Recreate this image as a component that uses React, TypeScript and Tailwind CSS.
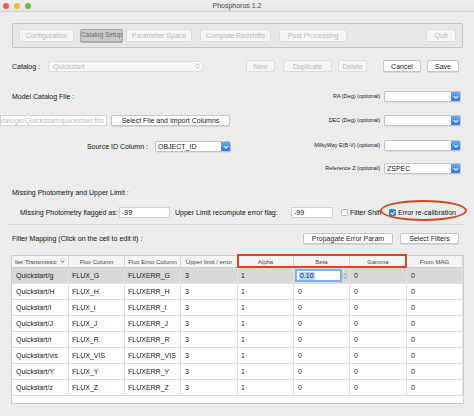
import type { ReactNode } from "react";

type BtnProps = {
  children: ReactNode;
  className?: string;
  disabled?: boolean;
};

function Button({ children, className = "", disabled = false }: BtnProps) {
  const look = disabled
    ? "border-[#dcdcdc] bg-[#f5f5f5] text-[#b9b9b9]"
    : "border-[#c6c6c6] bg-white text-[#1e1e1e] shadow-[0_0.5px_0.5px_rgba(0,0,0,0.18)]";
  return (
    <div
      className={`flex shrink-0 items-center justify-center whitespace-nowrap rounded-[2px] border text-[7px] leading-none ${look} ${className}`}
    >
      {children}
    </div>
  );
}

function ChevronDown({ className = "" }: { className?: string }) {
  return (
    <svg viewBox="0 0 8 8" className={className} fill="none" stroke="currentColor" strokeWidth={1.4}>
      <path d="M1.5 3 L4 5.5 L6.5 3" strokeLinecap="round" strokeLinejoin="round" />
    </svg>
  );
}

function UpDown({ className = "" }: { className?: string }) {
  return (
    <svg viewBox="0 0 6 10" className={className} fill="none" stroke="currentColor" strokeWidth={1}>
      <path d="M1.2 3.8 L3 2 L4.8 3.8" strokeLinecap="round" strokeLinejoin="round" />
      <path d="M1.2 6.2 L3 8 L4.8 6.2" strokeLinecap="round" strokeLinejoin="round" />
    </svg>
  );
}

function PopUp({ value = "", className = "" }: { value?: string; className?: string }) {
  return (
    <div
      className={`flex h-[11px] shrink-0 items-stretch overflow-hidden rounded-[2px] border border-[#c4c4c4] bg-white shadow-[0_0.5px_0.5px_rgba(0,0,0,0.12)] ${className}`}
    >
      <span className="flex flex-1 items-center pl-[2px] text-[7px] leading-none text-[#161616]">{value}</span>
      <span className="flex w-[9px] items-center justify-center bg-linear-to-b from-[#6cabf8] to-[#2d76ea] text-white">
        <ChevronDown className="h-[6px] w-[6px]" />
      </span>
    </div>
  );
}

const rows = [
  ["Quickstart/g", "FLUX_G", "FLUXERR_G"],
  ["Quickstart/H", "FLUX_H", "FLUXERR_H"],
  ["Quickstart/I", "FLUX_I", "FLUXERR_I"],
  ["Quickstart/J", "FLUX_J", "FLUXERR_J"],
  ["Quickstart/r", "FLUX_R", "FLUXERR_R"],
  ["Quickstart/vis", "FLUX_VIS", "FLUXERR_VIS"],
  ["Quickstart/Y", "FLUX_Y", "FLUXERR_Y"],
  ["Quickstart/z", "FLUX_Z", "FLUXERR_Z"],
];

const headers = ["Flux Column", "Flux Error Column", "Upper limit / error", "Alpha", "Beta", "Gamma", "From MAG"];

export default function App() {
  return (
    <div className="relative flex h-[416px] w-[474px] flex-col overflow-hidden bg-[#ececec] [font-family:'Liberation_Sans',Arial,sans-serif] text-[#1c1c1c]">
      {/* Title bar */}
      <div className="grid h-[12px] shrink-0 grid-cols-[1fr_auto_1fr] items-center border-b border-[#d2d2d2] bg-linear-to-b from-[#efefef] to-[#e4e4e4]">
        <div className="flex items-center gap-[5px] pl-[3px]">
          <span className="h-[6px] w-[6px] rounded-full bg-[#ee5d55]" />
          <span className="h-[6px] w-[6px] rounded-full bg-[#f4bd30]" />
          <span className="h-[6px] w-[6px] rounded-full bg-[#5dc441]" />
        </div>
        <div className="text-[7px] leading-none text-[#4a4a4a]">Phosphoros 1.2</div>
        <div />
      </div>

      {/* Toolbar */}
      <div className="ml-[12px] mt-[11px] flex h-[25px] w-[451px] shrink-0 items-center rounded-[1px] border border-[#c5c5c5] bg-[#e7e7e7] text-[6.5px]">
        <Button disabled className="ml-[6px] h-[13px] w-[55px] text-[6.5px]">Configuration</Button>
        <div className="ml-[6px] flex h-[13px] w-[43px] items-center justify-center whitespace-nowrap rounded-[2px] border border-[#a8a8a8] bg-[#c9c9c9] text-[6.5px] leading-none text-[#6c6c6c] shadow-[0_1px_0_rgba(0,0,0,0.25)]">
          Catalog Setup
        </div>
        <Button disabled className="ml-[3px] h-[13px] w-[66px] text-[6.5px]">Parameter Space</Button>
        <Button disabled className="ml-[8px] h-[13px] w-[71px] text-[6.5px]">Compute Redshifts</Button>
        <Button disabled className="ml-[8px] h-[13px] w-[68px] text-[6.5px]">Post Processing</Button>
        <Button disabled className="ml-auto mr-[6px] h-[13px] w-[30px] text-[6.5px]">Quit</Button>
      </div>

      {/* Catalog row */}
      <div className="mt-[12px] flex h-[12px] shrink-0 items-center">
        <span className="ml-[12px] w-[36px] text-[7px] leading-none text-[#111]">Catalog :</span>
        <div className="flex h-[11px] w-[155px] items-center justify-between rounded-[2px] border border-[#dedede] bg-[#f6f6f6] pl-[4px] pr-[2px] text-[7px] leading-none text-[#bdbdbd]">
          <span>Quickstart</span>
          <UpDown className="h-[8px] w-[5px] text-[#a9a9a9]" />
        </div>
        <Button disabled className="ml-[43px] h-[12px] w-[29px]">New</Button>
        <Button disabled className="ml-[8px] h-[12px] w-[49px]">Duplicate</Button>
        <Button disabled className="ml-[6px] h-[12px] w-[29px]">Delete</Button>
        <Button className="ml-[16px] h-[12px] w-[38px]">Cancel</Button>
        <Button className="ml-[6px] h-[12px] w-[32px]">Save</Button>
      </div>

      {/* Model catalog file section */}
      <div className="flex h-[102px] shrink-0">
        <div className="flex w-[231px] flex-col">
          <div className="mt-[20px] h-[9px] pl-[12px] text-[7px] leading-[9px] text-[#111]">Model Catalog File :</div>
          <div className="mt-[14px] flex h-[11px] items-center">
            <div className="flex h-[11px] w-[107px] items-center justify-end overflow-hidden border border-[#d4d4d4] bg-white pr-[2px] text-[7.5px] leading-none whitespace-nowrap text-[#bcbcbc]">
              Catalogs/Quickstart/quickstart.fits
            </div>
            <Button className="ml-[4px] h-[11px] w-[119px]">Select File and Import Columns</Button>
          </div>
          <div className="mt-[15px] flex h-[11px] items-center">
            <span className="w-[148px] text-right text-[7px] leading-none text-[#111]">Source ID Column :</span>
            <PopUp value="OBJECT_ID" className="ml-[7px] w-[76px]" />
          </div>
        </div>
        <div className="flex flex-1 flex-col items-end pr-[13px] text-[5.5px] leading-none text-[#222]">
          <div className="mt-[19px] flex h-[11px] items-center gap-[4px]">
            <span>RA (Deg) (optional)</span>
            <PopUp className="w-[77px]" />
          </div>
          <div className="mt-[13px] flex h-[11px] items-center gap-[4px]">
            <span>DEC (Deg) (optional)</span>
            <PopUp className="w-[77px]" />
          </div>
          <div className="mt-[14px] flex h-[11px] items-center gap-[4px]">
            <span>MilkyWay E(B-V) (optional)</span>
            <PopUp className="w-[77px]" />
          </div>
          <div className="mt-[12px] flex h-[11px] items-center gap-[4px]">
            <span>Reference Z (optional)</span>
            <PopUp value="ZSPEC" className="w-[77px]" />
          </div>
        </div>
      </div>

      {/* Missing photometry */}
      <div className="mt-[14px] h-[9px] shrink-0 pl-[12px] text-[7px] leading-[9px] text-[#111]">
        Missing Photometry and Upper Limit :
      </div>
      <div className="relative mt-[10px] flex h-[11px] shrink-0 items-center text-[7px] leading-none text-[#111]">
        <span className="ml-[20px] w-[99px] whitespace-nowrap">Missing Photometry flagged as:</span>
        <div className="flex h-[11px] w-[51px] items-center border border-[#d0d0d0] bg-white pl-[2px]">-99</div>
        <span className="ml-[5px] w-[116px] whitespace-nowrap">Upper Limit recompute error flag:</span>
        <div className="flex h-[11px] w-[42px] items-center border border-[#d0d0d0] bg-white pl-[2px]">-99</div>
        <span className="ml-[8px] h-[7px] w-[7px] rounded-[1.5px] border border-[#b4b4b4] bg-white" />
        <span className="ml-[2px] w-[31px] overflow-hidden whitespace-nowrap">Filter Shift</span>
        <span className="ml-[8px] flex h-[7px] w-[7px] items-center justify-center rounded-[1.5px] bg-[#2f80f0] text-white">
          <svg viewBox="0 0 8 8" className="h-[6px] w-[6px]" fill="none" stroke="currentColor" strokeWidth={1.4}>
            <path d="M1.5 4.2 L3.3 6 L6.5 2" strokeLinecap="round" strokeLinejoin="round" />
          </svg>
        </span>
        <span className="ml-[2px] whitespace-nowrap">Error re-calibration</span>
        <div className="absolute left-[380px] top-[-7px] h-[21px] w-[87px] rounded-[50%] border-2 border-[#cf4a22]" />
      </div>

      <div className="ml-[8px] mt-[6px] h-px w-[456px] shrink-0 bg-[#d9d9d9]" />

      {/* Filter mapping */}
      <div className="mt-[8px] flex h-[11px] shrink-0 items-center pr-[15px]">
        <span className="pl-[12px] text-[7px] leading-none text-[#111]">Filter Mapping (Click on the cell to edit it) :</span>
        <Button className="ml-auto h-[11px] w-[90px]">Propagate Error Param</Button>
        <Button className="ml-[7px] h-[11px] w-[59px]">Select Filters</Button>
      </div>

      {/* Table */}
      <div className="relative ml-[11px] mt-[11px] h-[149px] w-[453px] shrink-0 border border-[#cbcbcb] bg-white">
        <div className="grid h-[12px] grid-cols-[57px_56px_56px_57px_56px_56px_57px_56px] border-b border-[#cdcdcd] bg-[#f4f4f4] text-[6px] leading-none text-[#474747]">
          <div className="flex items-center justify-between border-r border-[#d6d6d6] pl-[3px] pr-[3px] whitespace-nowrap">
            <span>lter Transmissic</span>
            <ChevronDown className="h-[5px] w-[5px] text-[#555]" />
          </div>
          {headers.map((h) => (
            <div key={h} className="flex items-center justify-center whitespace-nowrap border-r border-[#d6d6d6]">
              {h}
            </div>
          ))}
        </div>
        {rows.map((r, i) => (
          <div
            key={r[0]}
            className={`grid h-[16px] grid-cols-[57px_56px_56px_57px_56px_56px_57px_56px] border-b border-[#e0e0e0] text-[7px] leading-none text-[#1a1a1a] ${i === 0 ? "bg-[#d8d8d8]" : ""}`}
          >
            <div className="flex items-center border-r border-[#e0e0e0] pl-[4px]">{r[0]}</div>
            <div className="flex items-center border-r border-[#e0e0e0] pl-[3px]">{r[1]}</div>
            <div className="flex items-center border-r border-[#e0e0e0] pl-[3px]">{r[2]}</div>
            <div className="flex items-center border-r border-[#e0e0e0] pl-[4px]">3</div>
            <div className="flex items-center border-r border-[#e0e0e0] pl-[3px]">1</div>
            {i === 0 ? (
              <div className="flex items-center border-r border-[#e0e0e0] pl-[1px]">
                <div className="flex h-[13px] w-[47px] items-center rounded-[1px] border-2 border-[#7eadf3] bg-white pl-[2px]">
                  <span className="bg-[#b5d5fc] px-px leading-[8px]">0.10</span>
                </div>
                <UpDown className="ml-[1px] h-[8px] w-[5px] text-[#8a8a8a]" />
              </div>
            ) : (
              <div className="flex items-center border-r border-[#e0e0e0] pl-[4px]">0</div>
            )}
            <div className="flex items-center border-r border-[#e0e0e0] pl-[4px]">0</div>
            <div className="flex items-center border-r border-[#e0e0e0] pl-[4px]">0</div>
          </div>
        ))}
        <div className="absolute left-[225px] top-[-2px] h-[14px] w-[170px] border-2 border-[#d4461c]" />
      </div>
    </div>
  );
}
